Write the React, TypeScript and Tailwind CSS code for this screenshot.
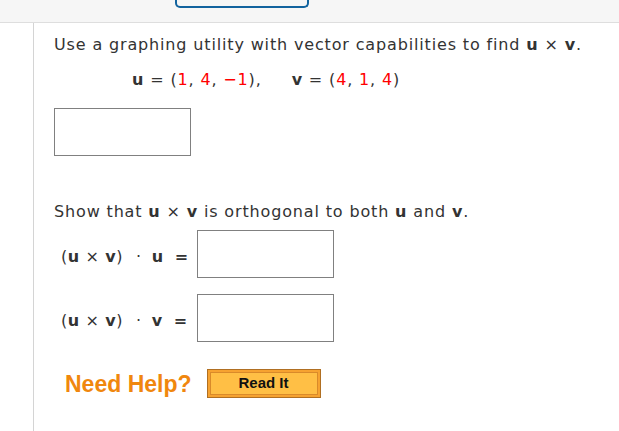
export default function App() {
  const font = { fontFamily: '"DejaVu Sans", Verdana, sans-serif' };
  const Row = ({ last }: { last: string }) => (
    <span className="pl-[7px] pt-[6px] w-[143px] whitespace-pre tracking-[0.6px] flex items-center">
      <span>
        (<b>u</b> × <b>v</b>)
      </span>
      <span className="ml-[13px]">·</span>
      <b className="ml-[10px]">{last}</b>
      <b className="ml-[11px]">=</b>
    </span>
  );
  return (
    <div className="w-[619px] h-[431px] bg-white overflow-hidden text-[#333]" style={font}>
      <div className="h-[23px] bg-[#f6f6f6] border-b border-[#dedede] relative">
        <div className="absolute left-[175px] top-[-4px] w-[134px] h-[12px] border-2 border-t-0 border-[#12639e] rounded-b-[5px] bg-[#f6f6f6]" />
      </div>
      <div className="flex">
        <div className="w-[34px] border-r border-[#d4d4d4] h-[408px] shrink-0" />
        <div className="pl-[20px] pt-[11px] flex-1 text-[16px] tracking-[0.85px]">
          <p className="leading-[22px]">
            Use a graphing utility with vector capabilities to find <b>u</b> × <b>v</b>.
          </p>
          <p className="leading-[22px] mt-[13px] pl-[78px] flex">
            <span>
              <b>u</b> = (<span className="text-[#f00]">1</span>, <span className="text-[#f00]">4</span>,{" "}
              <span className="text-[#f00]">−1</span>),
            </span>
            <span className="ml-[30px]">
              <b>v</b> = (<span className="text-[#f00]">4</span>, <span className="text-[#f00]">1</span>,{" "}
              <span className="text-[#f00]">4</span>)
            </span>
          </p>
          <div className="w-[137px] h-[48px] border border-[#808080] mt-[17px]" />
          <p className="leading-[22px] mt-[45px]">
            Show that <b>u</b> × <b>v</b> is orthogonal to both <b>u</b> and <b>v</b>.
          </p>
          <div className="flex items-center mt-[7px]">
            <Row last="u" />
            <div className="w-[137px] h-[48px] border border-[#808080]" />
          </div>
          <div className="flex items-center mt-[16px]">
            <Row last="v" />
            <div className="w-[137px] h-[48px] border border-[#808080]" />
          </div>
          <div className="flex items-center mt-[27px] pl-[11px] tracking-normal" style={{ fontFamily: '"Liberation Sans", Arial, sans-serif' }}>
            <span className="text-[23px] font-bold text-[#f0870e] leading-[28px]">Need Help?</span>
            <button className="ml-[15px] w-[114px] h-[29px] border border-[#b06f22] bg-[#f6a230] p-[2px]">
              <span className="flex items-center justify-center h-full bg-[#ffbf45] border border-[#d98a2a] text-[15px] font-bold text-[#111]">
                Read It
              </span>
            </button>
          </div>
        </div>
      </div>
    </div>
  );
}
